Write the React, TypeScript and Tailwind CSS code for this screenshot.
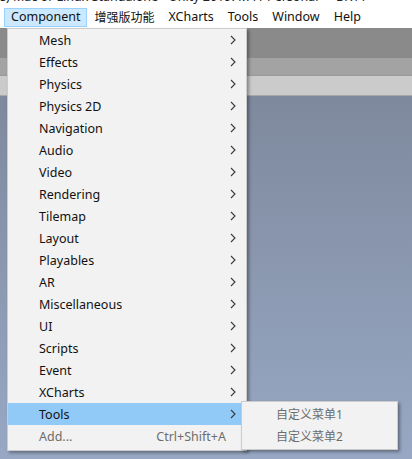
import React from "react";

const items: { label: string; sub?: boolean; active?: boolean; disabled?: boolean; shortcut?: string }[] = [
  { label: "Mesh", sub: true },
  { label: "Effects", sub: true },
  { label: "Physics", sub: true },
  { label: "Physics 2D", sub: true },
  { label: "Navigation", sub: true },
  { label: "Audio", sub: true },
  { label: "Video", sub: true },
  { label: "Rendering", sub: true },
  { label: "Tilemap", sub: true },
  { label: "Layout", sub: true },
  { label: "Playables", sub: true },
  { label: "AR", sub: true },
  { label: "Miscellaneous", sub: true },
  { label: "UI", sub: true },
  { label: "Scripts", sub: true },
  { label: "Event", sub: true },
  { label: "XCharts", sub: true },
  { label: "Tools", sub: true, active: true },
  { label: "Add...", disabled: true, shortcut: "Ctrl+Shift+A" },
];

const menuBar = ["Component", "增强版功能", "XCharts", "Tools", "Window", "Help"];

function Chevron() {
  return (
    <svg width="6" height="10" viewBox="0 0 6 10" className="block">
      <polyline points="1,1 5,5 1,9" fill="none" stroke="#3a3a3a" strokeWidth="1.1" />
    </svg>
  );
}

export default function App() {
  return (
    <div
      className="relative w-[412px] h-[459px] overflow-hidden bg-white text-[12.5px] text-[#111]"
      style={{ fontFamily: '"Noto Sans", "Noto Sans CJK SC", sans-serif' }}
    >
      {/* window chrome and editor background */}
      <div className="flex flex-col h-full">
        <div className="h-[8px] overflow-hidden">
          <div className="mt-[-11px] whitespace-nowrap leading-[15px] text-[#222]">
            s) Mac or Linux Standalone - Unity 2019.4.7f1 Personal - &lt;DX11&gt;
          </div>
        </div>
        <div className="flex h-[19px] pl-[4px]">
          {menuBar.map((m, i) => (
            <div
              key={m}
              className={
                i === 0
                  ? "flex items-center px-[6px] border border-[#99d1ff] bg-[#cce8ff] leading-none"
                  : "flex items-center px-[7px] leading-none"
              }
            >
              <span className={/[\u4e00-\u9fff]/.test(m) ? "text-[12px]" : ""}>{m}</span>
            </div>
          ))}
        </div>
        <div className="h-[1px]" />
        <div className="h-[30px] bg-[#8a8a8a]" />
        <div className="h-[18px] bg-[#a3a3a3] border-b border-[#999]" />
        <div className="h-[20px] bg-[#cbcbcb] border-b border-[#a8a8a8]" />
        <div className="flex-1 bg-gradient-to-b from-[#7e899d] to-[#98a8c4]" />
      </div>

      {/* Component dropdown */}
      <div className="absolute left-[7px] top-[28px] w-[240px] h-[423px] bg-[#f2f2f2] border border-[#cccccc] shadow-[2px_2px_3px_rgba(0,0,0,0.35)]">
        {items.map((it) => (
          <div
            key={it.label}
            className={
              "flex items-center h-[22px] pl-[31px] pr-[10px] " + (it.active ? "bg-[#91c9f7]" : "")
            }
          >
            <span className={"flex-1 pt-[2px] " + (it.disabled ? "text-[#6d6d6d]" : "")}>{it.label}</span>
            {it.sub && <Chevron />}
            {it.shortcut && <span className="mr-[10px] pt-[2px] text-[#6d6d6d]">{it.shortcut}</span>}
          </div>
        ))}
      </div>

      {/* Tools submenu */}
      <div className="absolute left-[241px] top-[401px] w-[157px] h-[49px] bg-[#f2f2f2] border border-[#cccccc] shadow-[2px_2px_3px_rgba(0,0,0,0.35)] pt-[1px]">
        {["自定义菜单1", "自定义菜单2"].map((s) => (
          <div key={s} className="flex items-center h-[22px] pl-[34px] pt-[1px] text-[12px] text-[#6d6d6d]">
            {s}
          </div>
        ))}
      </div>
    </div>
  );
}
